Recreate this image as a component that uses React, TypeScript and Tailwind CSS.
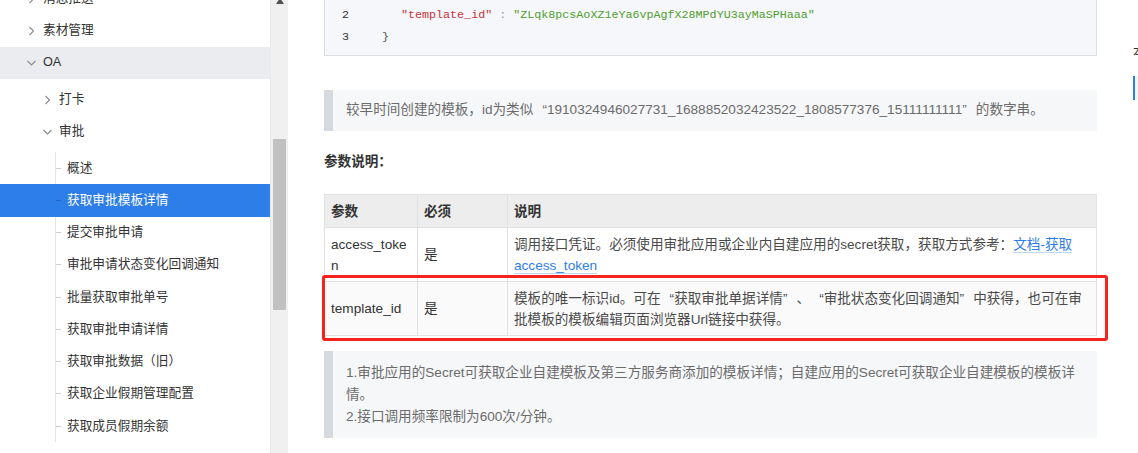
import React from 'react';

const sans = "font-['Liberation_Sans','Noto_Sans_CJK_SC',sans-serif]";

function ChevronRight() {
  return (
    <svg width="10" height="10" viewBox="0 0 10 10" className="shrink-0">
      <polyline points="3.5,1 7.5,5 3.5,9" fill="none" stroke="#8a8a8a" strokeWidth="1.1" />
    </svg>
  );
}

function ChevronDown() {
  return (
    <svg width="10" height="10" viewBox="0 0 10 10" className="shrink-0">
      <polyline points="1.5,3 5.5,7 9.5,3" fill="none" stroke="#8a8a8a" strokeWidth="1.1" />
    </svg>
  );
}

// full-width CJK quotes
function Lq() {
  return <span className="inline-block w-[13.6px] text-right">“</span>;
}
function Rq() {
  return <span className="inline-block w-[13.6px] text-left">”</span>;
}

const subItems = [
  '概述',
  '获取审批模板详情',
  '提交审批申请',
  '审批申请状态变化回调通知',
  '批量获取审批单号',
  '获取审批申请详情',
  '获取审批数据（旧）',
  '获取企业假期管理配置',
  '获取成员假期余额',
];

function Sidebar() {
  return (
    <div className="w-[270px] shrink-0 overflow-hidden text-[12.7px] text-[#333]">
      <div className="-mt-[17px]">
        <div className="h-8 flex items-center pl-[26px]">
          <ChevronRight />
          <span className="ml-[7px]">消息推送</span>
        </div>
        <div className="h-8 flex items-center pl-[26px]">
          <ChevronRight />
          <span className="ml-[7px]">素材管理</span>
        </div>
        <div className="h-8 flex items-center pl-[26px] bg-[#ebecf0]">
          <ChevronDown />
          <span className="ml-[7px]">OA</span>
        </div>
        <div className="pt-[5px]">
          <div className="h-8 flex items-center pl-[42px]">
            <ChevronRight />
            <span className="ml-[7px]">打卡</span>
          </div>
          <div className="h-8 flex items-center pl-[42px]">
            <ChevronDown />
            <span className="ml-[7px]">审批</span>
          </div>
          <div className="pt-[4px]">
            {subItems.map((item, i) => {
              const active = i === 1;
              return (
                <div
                  key={item}
                  className={`h-[32.25px] flex ${active ? 'bg-[#2d7ee8] text-white' : ''}`}
                >
                  <div
                    className={`ml-[55px] flex items-center border-l ${
                      active ? 'border-[#2d7ee8]' : 'border-[#e3e3e3]'
                    }`}
                  >
                    <span className={`w-[5px] h-px ${active ? 'bg-[#1f63bd]' : 'bg-[#cfcfcf]'}`} />
                    <span className="ml-[6px] whitespace-nowrap">{item}</span>
                  </div>
                </div>
              );
            })}
          </div>
        </div>
      </div>
    </div>
  );
}

function Scrollbar() {
  return (
    <div className="w-[18px] shrink-0 bg-[#f0f0f0] border-l border-[#e9e9e9] flex flex-col items-center">
      <div className="w-0 h-0 -mt-[2px] border-x-[4px] border-x-transparent border-b-[6px] border-b-[#505050]" />
      <div className="w-[13px] h-[171px] mt-[135px] bg-[#c1c1c1]" />
    </div>
  );
}

function CodeBlock() {
  return (
    <div className="bg-[#f6f7fa] border-x border-b border-[#dcdee3] pt-[4px] pb-[7px] font-['Liberation_Mono',monospace] text-[11.7px] leading-[22px]">
      <div className="flex">
        <span className="pl-[17px] w-[57px] text-[#333]">2</span>
        <span className="pl-[19px] whitespace-pre">
          <span className="text-[#c8323a]">"template_id"</span>
          <span className="text-[#999]"> : </span>
          <span className="text-[#4f9e2d]">"ZLqk8pcsAoXZ1eYa6vpAgfX28MPdYU3ayMaSPHaaa"</span>
        </span>
      </div>
      <div className="flex">
        <span className="pl-[17px] w-[57px] text-[#333]">3</span>
        <span className="text-[#555]">{'}'}</span>
      </div>
    </div>
  );
}

function Params() {
  return (
    <div className="relative mt-[21px]">
      <table className="w-[773px] table-fixed border-collapse text-[13.6px] leading-[21px]">
        <colgroup>
          <col className="w-[93px]" />
          <col className="w-[90px]" />
          <col />
        </colgroup>
        <thead>
          <tr className="bg-[#ededed] text-[#333] font-bold text-left">
            <th className="border border-[#dfe2e5] px-[6px] py-[5.5px]">参数</th>
            <th className="border border-[#dfe2e5] px-[6px] py-[5.5px]">必须</th>
            <th className="border border-[#dfe2e5] px-[6px] py-[5.5px]">说明</th>
          </tr>
        </thead>
        <tbody>
          <tr className="bg-white">
            <td className="border border-[#dfe2e5] px-[6px] py-[5.5px] text-[#333] break-all">access_token</td>
            <td className="border border-[#dfe2e5] px-[6px] py-[5.5px] text-[#333]">是</td>
            <td className="border border-[#dfe2e5] px-[6px] py-[5.5px] text-[#4a4a4a]">
              调用接口凭证。必须使用审批应用或企业内自建应用的secret获取，获取方式参考：
              <span className="text-[#2f7de6] border-b border-[#bcd5f5]">文档-获取access_token</span>
            </td>
          </tr>
          <tr className="bg-[#fafafa]">
            <td className="border border-[#dfe2e5] px-[6px] py-[5.5px] text-[#333]">template_id</td>
            <td className="border border-[#dfe2e5] px-[6px] py-[5.5px] text-[#333]">是</td>
            <td className="border border-[#dfe2e5] px-[6px] py-[5.5px] text-[#4a4a4a]">
              模板的唯一标识id。可在<Lq />获取审批单据详情<Rq />、<Lq />审批状态变化回调通知<Rq />中获得，也可在审批模板的模板编辑页面浏览器Url链接中获得。
            </td>
          </tr>
        </tbody>
      </table>
      {/* highlight annotation */}
      <div className="absolute left-[-2px] top-[81px] w-[786px] h-[66px] border-[3px] border-[#f5231c] rounded-[3px]" />
    </div>
  );
}

export default function App() {
  return (
    <div className={`w-[1138px] h-[453px] overflow-hidden bg-white flex ${sans}`}>
      <Sidebar />
      <Scrollbar />
      <div className="ml-[36px] w-[773px] shrink-0">
        <CodeBlock />

        <div className="mt-[34px] bg-[#f6f7f9] border-l-[9px] border-[#d6dae0] pl-[13px] pt-[9px] pb-[10px] text-[13.6px] leading-[22px] text-[#6b6b6b] whitespace-nowrap">
          较早时间创建的模板，id为类似<Lq />1910324946027731_1688852032423522_1808577376_15111111111<Rq />的数字串。
        </div>

        <div className="mt-[20px] text-[13.6px] leading-[22px] font-bold text-[#333]">参数说明：</div>

        <Params />

        <div className="mt-[15px] bg-[#f6f7f9] border-l-[9px] border-[#d6dae0] pl-[13px] pr-[16px] pt-[11px] pb-[10px] text-[13.6px] leading-[22px] text-[#6b6b6b]">
          <p>1.审批应用的Secret可获取企业自建模板及第三方服务商添加的模板详情；自建应用的Secret可获取企业自建模板的模板详情。</p>
          <p>2.接口调用频率限制为600次/分钟。</p>
        </div>
      </div>
      <div className="ml-[36px] shrink-0 w-[10px] overflow-hidden">
        <div className="mt-[45px] text-[12.7px] leading-[14px] text-[#333] whitespace-nowrap">本页目录</div>
        <div className="mt-[17px] h-[24px] border-l-2 border-[#2d7ee8] bg-[#f3f4f6]" />
      </div>
    </div>
  );
}
